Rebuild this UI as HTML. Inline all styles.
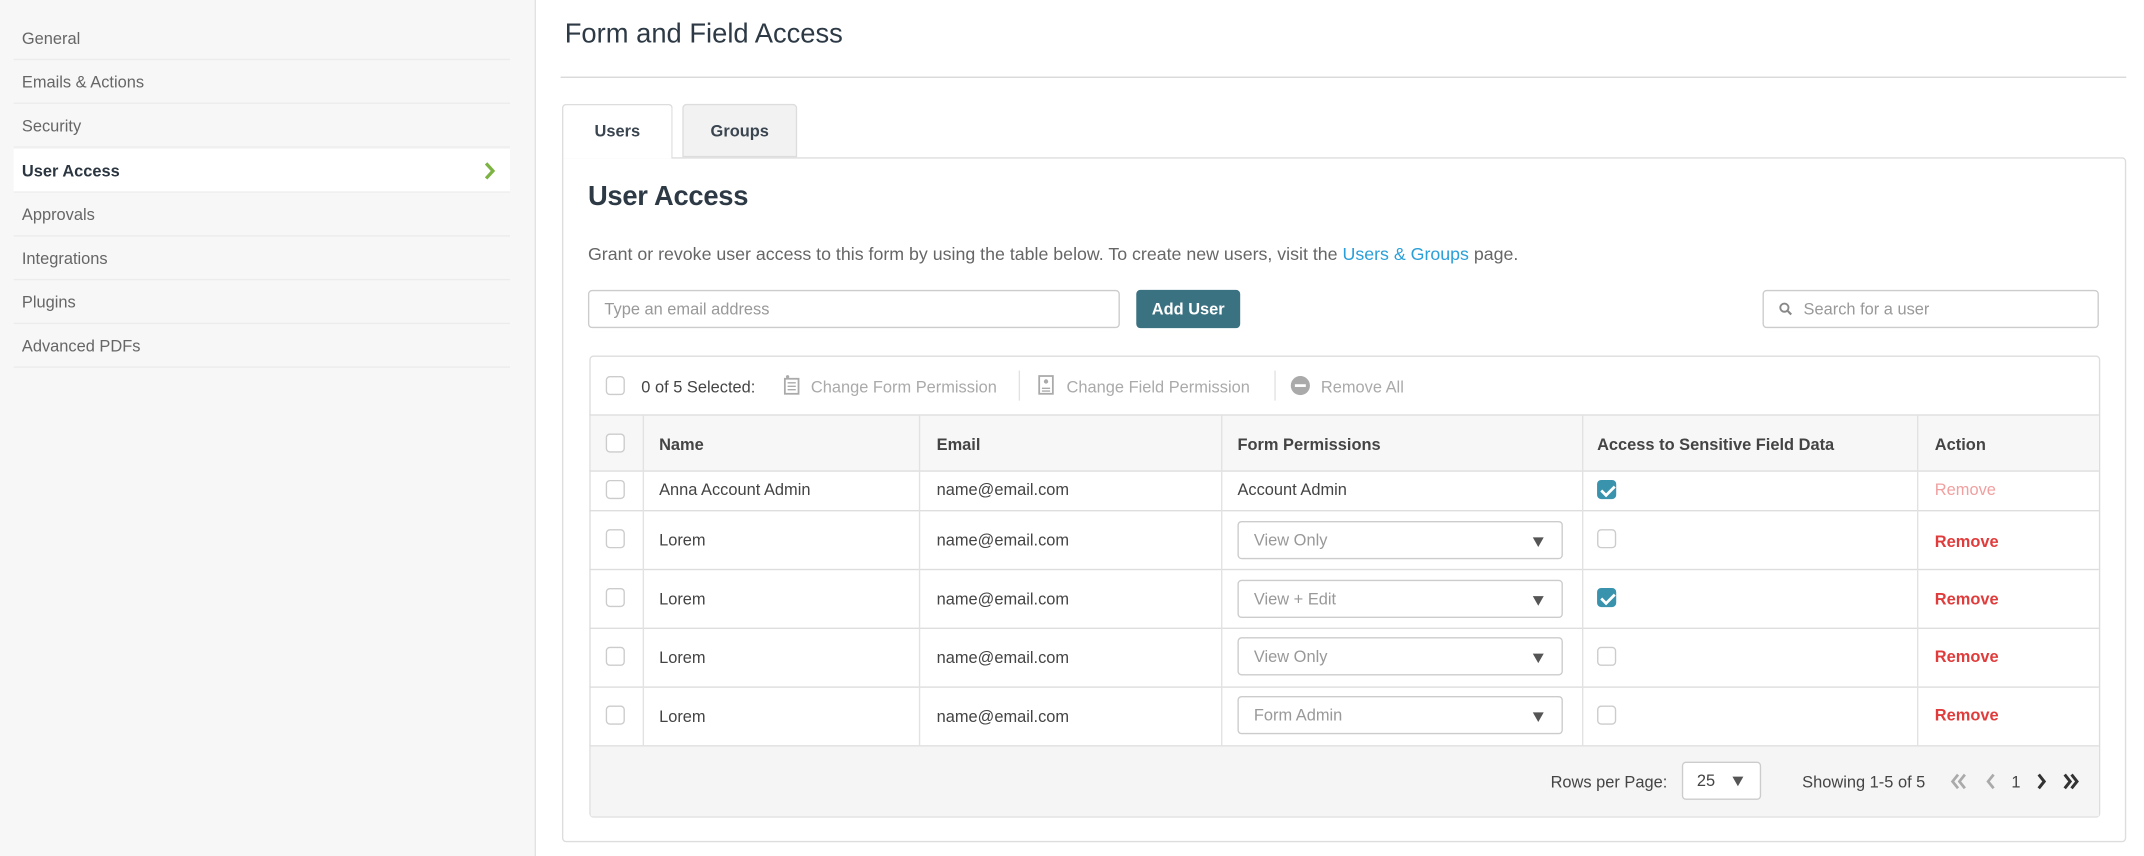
<!DOCTYPE html>
<html><head><meta charset="utf-8"><style>
*{box-sizing:border-box;margin:0;padding:0}
html,body{width:2144px;height:856px;overflow:hidden;background:#fff}
#w{width:1568px;height:626px;transform:scale(1.36735);transform-origin:0 0;position:relative;font-family:"Liberation Sans",Arial,sans-serif;color:#333}
.a{position:absolute}
.side{left:0;top:0;width:392px;height:626px;background:#f7f7f7;border-right:1px solid #e2e2e2}
.si{position:absolute;left:10px;width:363px;height:32px;border-bottom:1px solid #ececec;font-size:12px;color:#666;padding-left:6px;line-height:32px}
.cb{position:absolute;width:14px;height:14px;border:1px solid #ccc;border-radius:3px;background:#fff}
.ck{background:#3a93ad;border-color:#3a93ad}
.ck:after{content:"";position:absolute;left:4px;top:1px;width:4px;height:8px;border:solid #fff;border-width:0 2px 2px 0;transform:rotate(45deg)}
.t{position:absolute;font-size:12px;color:#444}
.sel{position:absolute;left:905px;width:238px;height:28px;border:1px solid #ccc;border-radius:3px;font-size:12px;color:#999;line-height:26px;padding-left:11px;background:#fff}
.sel:after{content:"";position:absolute;right:13px;top:11px;border:4px solid transparent;border-top:7px solid #555;border-bottom:0}
.rm{position:absolute;left:1415px;font-size:12px;font-weight:bold;color:#e03c3c}
.hl{position:absolute;left:431px;width:1104px;height:1px;background:#ddd}
.vl{position:absolute;width:1px;background:#e2e2e2}
</style></head><body><div id="w">
<div class="a side"></div>
<div class="si" style="top:12px">General</div>
<div class="si" style="top:44px">Emails &amp; Actions</div>
<div class="si" style="top:76px">Security</div>
<div class="si" style="top:109px;background:#fff;color:#2b3640;font-weight:bold">User Access<svg style="position:absolute;right:11px;top:9px" width="8" height="14" viewBox="0 0 8 14"><path d="M1.5 1.5L6.5 7L1.5 12.5" fill="none" stroke="#7cb342" stroke-width="2.4"/></svg></div>
<div class="si" style="top:141px">Approvals</div>
<div class="si" style="top:173px">Integrations</div>
<div class="si" style="top:205px">Plugins</div>
<div class="si" style="top:237px">Advanced PDFs</div>

<div class="a" style="left:413px;top:14px;font-size:20px;color:#2d3a45">Form and Field Access</div>
<div class="a" style="left:410px;top:56px;width:1145px;height:1px;background:#d8d8d8"></div>

<div class="a" style="left:411px;top:115px;width:1144px;height:501px;border:1px solid #ddd;border-radius:0 3px 3px 3px;background:#fff"></div>
<div class="a" style="left:411px;top:76px;width:81px;height:40px;border:1px solid #ddd;border-bottom:none;border-radius:3px 3px 0 0;background:#fff;font-size:12px;font-weight:bold;color:#3a4550;text-align:center;line-height:39px">Users</div>
<div class="a" style="left:499px;top:76px;width:84px;height:39px;border:1px solid #ddd;border-radius:3px 3px 0 0;background:#f2f2f2;font-size:12px;font-weight:bold;color:#3a4550;text-align:center;line-height:39px">Groups</div>

<div class="a" style="left:430px;top:133px;font-size:20px;color:#2d3a45;font-weight:bold;letter-spacing:-0.2px">User Access</div>
<div class="a" style="left:430px;top:178px;font-size:13px;color:#666">Grant or revoke user access to this form by using the table below. To create new users, visit the <span style="color:#2a9fd8">Users &amp; Groups</span> page.</div>
<div class="a" style="left:430px;top:212px;width:389px;height:28px;border:1px solid #ccc;border-radius:3px;font-size:12px;color:#999;line-height:26px;padding-left:11px">Type an email address</div>
<div class="a" style="left:831px;top:212px;width:76px;height:28px;border-radius:3px;background:#3b7282;color:#fff;font-size:12px;font-weight:bold;text-align:center;line-height:28px">Add User</div>
<div class="a" style="left:1289px;top:212px;width:246px;height:28px;border:1px solid #ccc;border-radius:3px;font-size:12px;color:#999;line-height:26px;padding-left:29px">Search for a user<svg style="position:absolute;left:11px;top:8px" width="10" height="10" viewBox="0 0 10 10"><circle cx="4" cy="4" r="3" fill="none" stroke="#888" stroke-width="1.4"/><path d="M6.2 6.2L9 9" stroke="#888" stroke-width="1.6"/></svg></div>

<div class="a" style="left:431px;top:260px;width:1105px;height:338px;border:1px solid #ddd;border-radius:3px"></div>
<div class="cb" style="left:443px;top:275px"></div>
<div class="t" style="left:469px;top:276px;color:#444">0 of 5 Selected:</div>
<svg class="a" style="left:573px;top:274px" width="12" height="15" viewBox="0 0 12 15"><rect x="1" y="3" width="10" height="11" fill="none" stroke="#aaa" stroke-width="1.3"/><path d="M3 6h6M3 8.5h6M3 11h6" stroke="#aaa"/><circle cx="3" cy="1.5" r="1.2" fill="#aaa"/></svg>
<div class="t" style="left:593px;top:276px;color:#aaa">Change Form Permission</div>
<div class="vl" style="left:745px;top:271px;height:22px"></div>
<svg class="a" style="left:759px;top:274px" width="12" height="15" viewBox="0 0 12 15"><rect x="1" y="1" width="10" height="13" fill="none" stroke="#aaa" stroke-width="1.3"/><circle cx="6" cy="5" r="1.6" fill="#aaa"/><path d="M3 10h6M3 12h6" stroke="#aaa"/></svg>
<div class="t" style="left:780px;top:276px;color:#aaa">Change Field Permission</div>
<div class="vl" style="left:932px;top:271px;height:22px"></div>
<div class="a" style="left:944px;top:275px;width:14px;height:14px;border-radius:50%;background:#aaa"><div style="position:absolute;left:3px;top:6px;width:8px;height:2px;background:#fff"></div></div>
<div class="t" style="left:966px;top:276px;color:#aaa">Remove All</div>

<div class="a" style="left:432px;top:304px;width:1103px;height:40px;background:#f7f7f7"></div>
<div class="hl" style="top:303px"></div><div class="hl" style="top:344px"></div><div class="hl" style="top:373px"></div><div class="hl" style="top:416px"></div><div class="hl" style="top:459px"></div><div class="hl" style="top:502px"></div><div class="hl" style="top:545px"></div>
<div class="vl" style="left:470px;top:304px;height:241px"></div>
<div class="vl" style="left:672px;top:304px;height:241px"></div>
<div class="vl" style="left:893px;top:304px;height:241px"></div>
<div class="vl" style="left:1157px;top:304px;height:241px"></div>
<div class="vl" style="left:1402px;top:304px;height:241px"></div>
<div class="cb" style="left:443px;top:317px"></div>
<div class="t" style="left:482px;top:318px;color:#444;font-weight:bold">Name</div>
<div class="t" style="left:685px;top:318px;color:#444;font-weight:bold">Email</div>
<div class="t" style="left:905px;top:318px;color:#444;font-weight:bold">Form Permissions</div>
<div class="t" style="left:1168px;top:318px;color:#444;font-weight:bold">Access to Sensitive Field Data</div>
<div class="t" style="left:1415px;top:318px;color:#444;font-weight:bold">Action</div>

<div class="cb" style="left:443px;top:351px"></div>
<div class="t" style="left:482px;top:351px">Anna Account Admin</div>
<div class="t" style="left:685px;top:351px">name@email.com</div>
<div class="t" style="left:905px;top:351px">Account Admin</div>
<div class="cb ck" style="left:1168px;top:351px"></div>
<div class="rm" style="top:351px;color:#f0a0a0;font-weight:normal">Remove</div>

<div class="cb" style="left:443px;top:387px"></div><div class="t" style="left:482px;top:388px">Lorem</div><div class="t" style="left:685px;top:388px">name@email.com</div><div class="sel" style="top:381px">View Only</div><div class="cb" style="left:1168px;top:387px"></div><div class="rm" style="top:389px">Remove</div>
<div class="cb" style="left:443px;top:430px"></div><div class="t" style="left:482px;top:431px">Lorem</div><div class="t" style="left:685px;top:431px">name@email.com</div><div class="sel" style="top:424px">View + Edit</div><div class="cb ck" style="left:1168px;top:430px"></div><div class="rm" style="top:431px">Remove</div>
<div class="cb" style="left:443px;top:473px"></div><div class="t" style="left:482px;top:474px">Lorem</div><div class="t" style="left:685px;top:474px">name@email.com</div><div class="sel" style="top:466px">View Only</div><div class="cb" style="left:1168px;top:473px"></div><div class="rm" style="top:473px">Remove</div>
<div class="cb" style="left:443px;top:516px"></div><div class="t" style="left:482px;top:517px">Lorem</div><div class="t" style="left:685px;top:517px">name@email.com</div><div class="sel" style="top:509px">Form Admin</div><div class="cb" style="left:1168px;top:516px"></div><div class="rm" style="top:516px">Remove</div>

<div class="a" style="left:432px;top:546px;width:1103px;height:51px;background:#f5f5f5"></div>
<div class="t" style="left:1134px;top:565px">Rows per Page:</div>
<div class="a" style="left:1230px;top:557px;width:58px;height:28px;border:1px solid #ccc;border-radius:3px;background:#fff;font-size:12px;color:#444;line-height:26px;padding-left:10px">25<span style="position:absolute;right:12px;top:10px;border:4px solid transparent;border-top:7px solid #555;border-bottom:0"></span></div>
<div class="t" style="left:1318px;top:565px">Showing 1-5 of 5</div>
<svg class="a" style="left:1426px;top:565px" width="14" height="13" viewBox="0 0 14 13"><path d="M6 1.5L2 6.5L6 11.5M11 1.5L7 6.5L11 11.5" fill="none" stroke="#aaa" stroke-width="2"/></svg>
<svg class="a" style="left:1452px;top:565px" width="8" height="13" viewBox="0 0 8 13"><path d="M6 1.5L2 6.5L6 11.5" fill="none" stroke="#aaa" stroke-width="2"/></svg>
<div class="t" style="left:1471px;top:565px">1</div>
<svg class="a" style="left:1489px;top:565px" width="8" height="13" viewBox="0 0 8 13"><path d="M2 1.5L6 6.5L2 11.5" fill="none" stroke="#333" stroke-width="2.2"/></svg>
<svg class="a" style="left:1508px;top:565px" width="14" height="13" viewBox="0 0 14 13"><path d="M2 1.5L6 6.5L2 11.5M7 1.5L11 6.5L7 11.5" fill="none" stroke="#333" stroke-width="2.2"/></svg>
</div></body></html>
